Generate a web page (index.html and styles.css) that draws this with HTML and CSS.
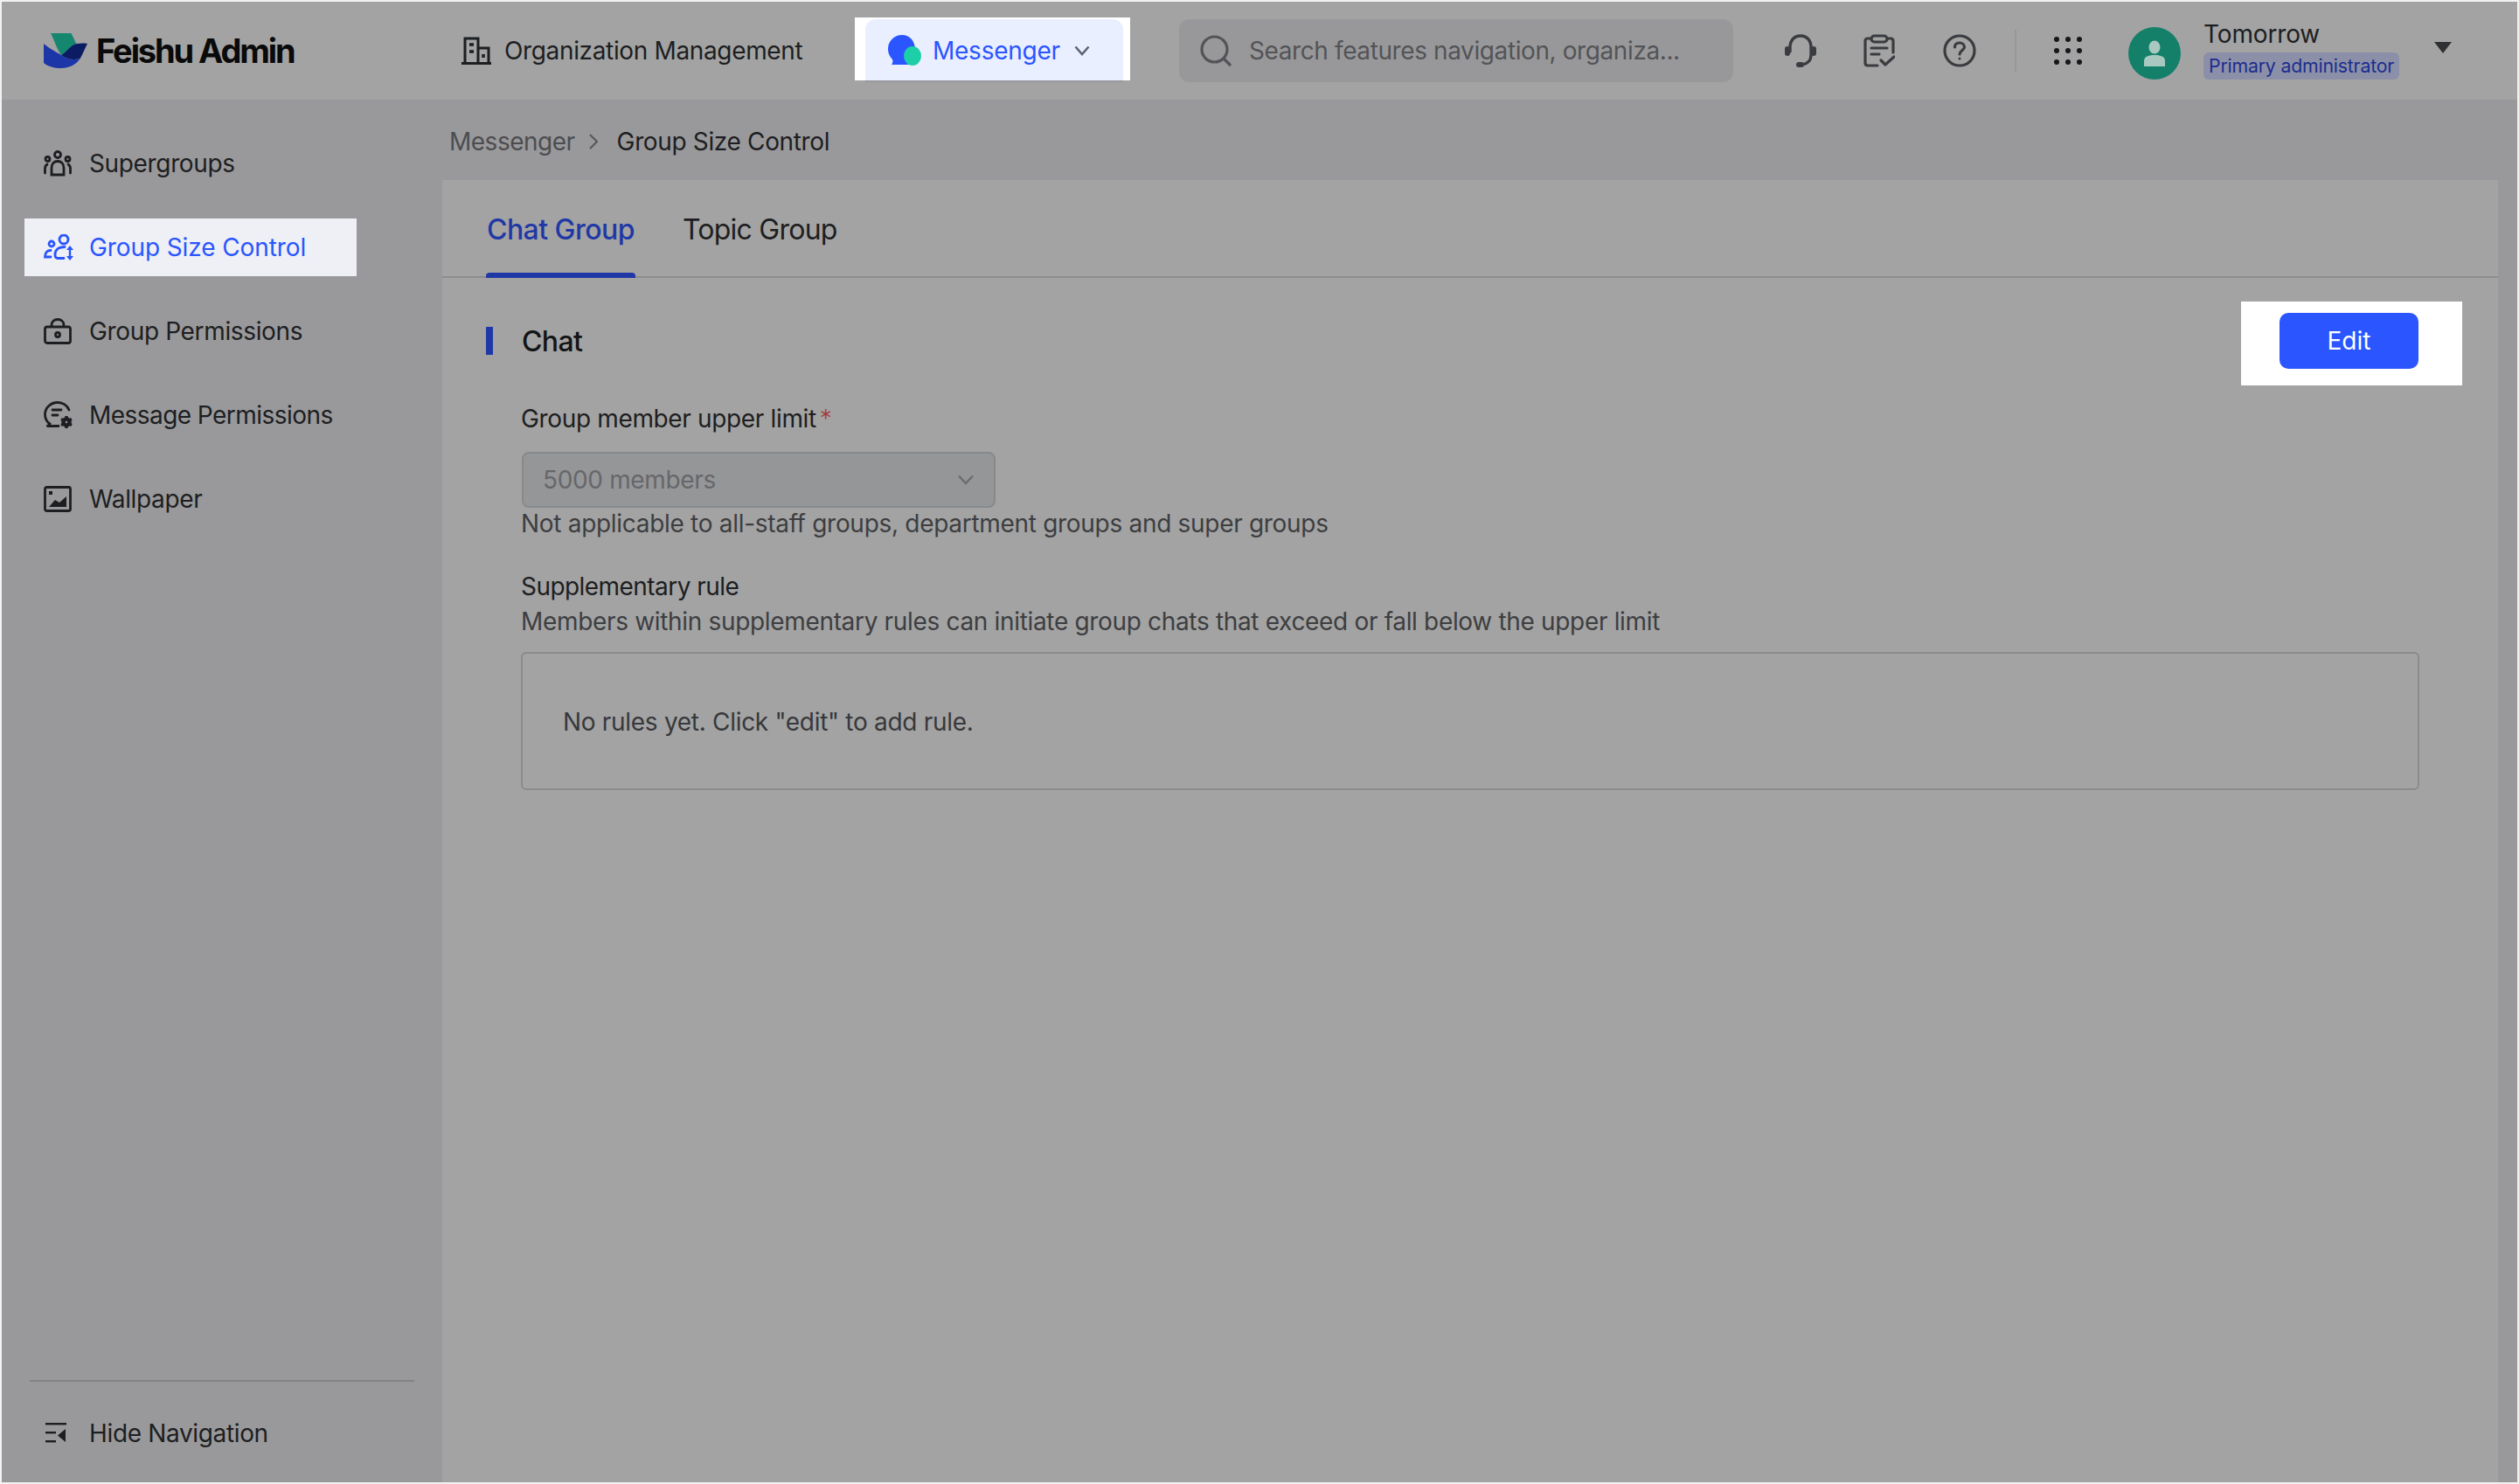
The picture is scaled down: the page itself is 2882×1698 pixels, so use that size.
FILE: index.html
```html
<!DOCTYPE html>
<html lang="en">
<head>
<meta charset="utf-8">
<title>Feishu Admin</title>
<link rel="stylesheet" href="styles.css">
</head>
<body>
<div class="app">
  <header class="topbar">
    <div class="brand">
      <svg class="logo" viewBox="0 0 50 40" width="50" height="40">
        <path fill="#16876f" d="M8 0H31.5L38 13.5C32 17 26 21 20 25C15 18 12 8 8 0Z"/>
        <path fill="#1c36a8" d="M0 12C7 18 14 21 20 25C27 30 34 31 41.7 29C37 36 29 40 20 40C12 40 5 38 0 34Z"/>
        <path fill="#0c1c63" d="M20 25C25 22 29 17 33 14C38 11.500 44 11 50 12C47 18 45 23 41.700 29C34 31 27 30 20 25Z"/>
      </svg>
      <span class="brand-name">Feishu Admin</span>
    </div>
    <div class="org">
      <svg viewBox="0 0 34 32" width="34" height="32" fill="none" stroke="#1d1e21" stroke-width="3">
        <path d="M0 30.500H34M4 30V2H19V30M19 13H31V30"/>
        <path d="M9 9H14M9 17H14M25 20V24" stroke-width="3.500"/>
      </svg>
      <span>Organization Management</span>
    </div>
    <div class="spot">
      <div class="product">
        <svg viewBox="0 0 38 36" width="38" height="36">
          <path fill="#2a55ff" d="M16 0C25 0 31 7 31 17V34H4C5 33 6 30 5 28C2 25 0 21 0 16C0 7 7 0 16 0Z"/>
          <ellipse fill="#1ccfa8" cx="28" cy="24" rx="10" ry="11"/>
        </svg>
        <span>Messenger</span>
        <svg class="chev" viewBox="0 0 18 12" width="18" height="12" fill="none" stroke="#5b6270" stroke-width="2.500"><path d="M1.500 1.500L9 10L16.500 1.500"/></svg>
      </div>
    </div>
    <div class="search">
      <svg viewBox="0 0 36 36" width="36" height="36" fill="none" stroke="#535457" stroke-width="3.200" stroke-linecap="round"><circle cx="16.500" cy="16.500" r="14.500"/><path d="M27 27L34 34"/></svg>
      <span>Search features navigation, organiza...</span>
    </div>
    <div class="tools">
      <svg viewBox="0 0 36 38" width="36" height="38" fill="none" stroke="#3a3c40" stroke-width="3.400" stroke-linecap="round">
        <path d="M6 20V15C6 7 11 2 18 2C25 2 30 7 30 15V24C30 30 26 34 20 35"/>
        <rect x="0" y="14" width="6" height="11" rx="3" fill="#3a3c40" stroke="none"/>
        <rect x="30" y="14" width="6" height="11" rx="3" fill="#3a3c40" stroke="none"/>
        <rect x="13" y="32" width="9" height="6" rx="3" fill="#3a3c40" stroke="none"/>
      </svg>
      <svg viewBox="0 0 36 38" width="36" height="38" fill="none" stroke="#3a3c40" stroke-width="3.200" stroke-linecap="round" stroke-linejoin="round">
        <path d="M8 5H5C3 5 2 6 2 8V33C2 35 3 36 5 36H16M28 5H31C33 5 34 6 34 8V21"/>
        <rect x="9" y="2" width="18" height="7" rx="3.500"/>
        <path d="M9 16H27M9 23H18M20 30L25 35L35 26"/>
      </svg>
      <svg viewBox="0 0 38 38" width="38" height="38" fill="none" stroke="#3a3c40" stroke-width="3.200" stroke-linecap="round">
        <circle cx="19" cy="19" r="17"/>
        <path d="M13.500 15C13.500 11.500 16 10 19 10C22 10 24.500 12 24.500 15C24.500 18 19 19 19 23"/>
        <circle cx="19" cy="28" r="1.500" fill="#3a3c40" stroke="none"/>
      </svg>
      <i class="sep"></i>
      <div class="dots"><i></i><i></i><i></i><i></i><i></i><i></i><i></i><i></i><i></i></div>
    </div>
    <div class="user">
      <div class="avatar">
        <svg viewBox="0 0 24 30" width="24" height="30" fill="#a9c9c0"><ellipse cx="12" cy="8" rx="6.500" ry="7.500"/><path d="M0 30V24C0 19 4 17 12 17C20 17 24 19 24 24V30Z"/></svg>
      </div>
      <div class="user-info">
        <div class="user-name">Tomorrow</div>
        <div class="user-role">Primary administrator</div>
      </div>
      <svg class="caret" viewBox="0 0 20 13" width="20" height="13"><path fill="#2f3033" d="M0 0H20L10 13Z"/></svg>
    </div>
  </header>
  <div class="body">
    <aside class="sidebar">
      <nav class="nav">
        <a class="nav-item">
          <svg viewBox="0 0 32 30" width="32" height="30" fill="none" stroke="#1d1e21" stroke-width="2.800" stroke-linecap="round">
            <circle cx="16" cy="5" r="3.500"/><circle cx="4.500" cy="10" r="2.500"/><circle cx="27.500" cy="10" r="2.500"/>
            <path d="M9 28V20C9 15 12 12.500 16 12.500C20 12.500 23 15 23 20V28ZM1.500 26V21C1.500 18 2.500 17 4 16M30.500 26V21C30.500 18 29.500 17 28 16"/>
          </svg>
          <span>Supergroups</span>
        </a>
        <a class="nav-item active">
          <svg viewBox="0 0 34 30" width="34" height="30" fill="none" stroke="#2a55ff" stroke-width="2.800" stroke-linecap="round">
            <circle cx="23" cy="6" r="5"/><circle cx="9" cy="11" r="3"/>
            <path d="M8 18.500C4 18.500 1.500 21 1.500 26H8M24 14.500C17 14.500 13 18 13 23C13 26 14 27.500 16 27.500H23"/>
            <path d="M30 16V27" stroke-width="2.400"/>
            <path fill="#2a55ff" stroke="none" d="M30 13L34 18H26ZM30 30L34 25H26Z"/>
          </svg>
          <span>Group Size Control</span>
        </a>
        <a class="nav-item">
          <svg viewBox="0 0 32 30" width="32" height="30" fill="none" stroke="#1d1e21" stroke-width="2.800">
            <rect x="1.500" y="10" width="29" height="18.500" rx="2.500"/>
            <path d="M9 10V8C9 4 12 1.500 16 1.500C20 1.500 23 4 23 8V10"/>
            <circle cx="16" cy="19" r="2.500"/>
          </svg>
          <span>Group Permissions</span>
        </a>
        <a class="nav-item nav-item-tight">
          <svg viewBox="0 0 34 32" width="34" height="32" fill="none" stroke="#1d1e21" stroke-width="2.800" stroke-linecap="round">
            <path d="M29 10C27 5 22 1.500 16 1.500C8 1.500 1.500 7.500 1.500 15C1.500 20 3.500 23.500 7 26C6 27.500 5 28 3.500 28.500H17"/>
            <path d="M10 10H20M10 16H16"/>
            <circle cx="26" cy="24" r="3.500" stroke-width="4.500"/>
            <path d="M26 17V19M26 29V31M20 20.500L22 21.500M30 26.500L32 27.500M20 27.500L22 26.500M30 21.500L32 20.500" stroke-width="3.400" stroke-linecap="butt"/>
          </svg>
          <span>Message Permissions</span>
        </a>
        <a class="nav-item">
          <svg viewBox="0 0 32 30" width="32" height="30" fill="none" stroke="#1d1e21" stroke-width="2.800">
            <rect x="1.500" y="1.500" width="29" height="27" rx="2"/>
            <rect x="6" y="6" width="4" height="4" fill="#1d1e21" stroke="none"/>
            <path fill="#1d1e21" stroke="none" d="M6 24L13 16L18 19L26 12V24Z"/>
          </svg>
          <span>Wallpaper</span>
        </a>
      </nav>
      <div class="sidebar-foot">
        <a class="nav-item">
          <svg viewBox="0 0 24 24" width="24" height="24" fill="#1d1e21">
            <rect x="0" y="0" width="24" height="2.400"/><rect x="0" y="10" width="12" height="2.400"/><rect x="0" y="20" width="12" height="2.400"/>
            <path d="M23 7V22L14 14.500Z"/>
          </svg>
          <span>Hide Navigation</span>
        </a>
      </div>
    </aside>
    <main class="main">
      <div class="crumbs">
        <span class="crumb-parent">Messenger</span>
        <svg viewBox="0 0 10 18" width="10" height="18" fill="none" stroke="#55565a" stroke-width="2"><path d="M1 1L9 9L1 17"/></svg>
        <span>Group Size Control</span>
      </div>
      <section class="card">
        <div class="tabs">
          <div class="tab active">Chat Group</div>
          <div class="tab">Topic Group</div>
        </div>
        <div class="pane">
          <div class="pane-head">
            <h2 class="pane-title">Chat</h2>
            <div class="edit-spot"><button class="edit-btn" type="button">Edit</button></div>
          </div>
          <div class="form">
            <div class="label">Group member upper limit<span class="req">*</span></div>
            <div class="select">
              <span>5000 members</span>
              <svg viewBox="0 0 20 12" width="20" height="12" fill="none" stroke="#6b6c6f" stroke-width="2.400"><path d="M2 1.500L10 10L18 1.500"/></svg>
            </div>
            <div class="hint">Not applicable to all-staff groups, department groups and super groups</div>
            <div class="label label-rule">Supplementary rule</div>
            <div class="hint hint-rule">Members within supplementary rules can initiate group chats that exceed or fall below the upper limit</div>
            <div class="rules">No rules yet. Click "edit" to add rule.</div>
          </div>
        </div>
      </section>
    </main>
  </div>
</div>
</body>
</html>
```
FILE: styles.css
```css
* { box-sizing: border-box; }
html, body { margin: 0; padding: 0; }
body {
  font-family: Inter, "Liberation Sans", sans-serif;
  font-size: 28px;
  letter-spacing: -0.35px;
  color: #1d1e21;
  background: #f2f2f2;
}
.app {
  width: 2882px;
  height: 1698px;
  padding: 2px;
  display: flex;
  flex-direction: column;
  overflow: hidden;
}
.topbar {
  height: 112px;
  flex: none;
  background: #a3a3a3;
  display: flex;
  align-items: center;
  position: relative;
}
.brand { display: flex; align-items: center; margin-left: 48px; width: 478px; gap: 10px; }
.logo { flex: none; }
.brand-name { font-size: 38px; font-weight: 700; color: #0a0a0b; letter-spacing: -2.1px; line-height: 40px; }
.org { display: flex; align-items: center; gap: 15px; width: 450px; }
.spot {
  width: 315px;
  height: 72px;
  background: #fff;
  padding: 2px 8px 0 12px;
  margin-top: -4px;
  flex: none;
}
.product {
  height: 70px;
  background: #e9efff;
  border-radius: 12px 12px 0 0;
  box-shadow: 0 2px 0 #97989d;
  display: flex;
  align-items: center;
  padding-left: 26px;
  padding-top: 1px;
  color: #2a55ff;
  letter-spacing: -0.25px;
}
.product span { margin-left: 13px; }
.chev { margin-left: 16px; }
.search {
  width: 634px;
  height: 72px;
  margin-left: 56px;
  background: #98989a;
  border-radius: 12px;
  display: flex;
  align-items: center;
  padding-left: 24px;
  gap: 20px;
  color: #535457;
  letter-spacing: -0.4px;
  white-space: nowrap;
}
.tools { display: flex; align-items: center; margin-left: 59px; }
.tools svg + svg { margin-left: 54px; }
.tools svg:nth-child(3) { margin-left: 55px; }
.sep { width: 2px; height: 48px; background: #979797; margin-left: 44px; }
.dots {
  margin-left: 43px;
  display: grid;
  grid-template-columns: repeat(3, 6px);
  gap: 7px;
}
.dots i { width: 6px; height: 6px; border-radius: 50%; background: #16171a; }
.user { display: flex; align-items: center; margin-left: 53px; }
.avatar {
  width: 60px;
  height: 60px;
  border-radius: 50%;
  background: #15806a;
  display: flex;
  align-items: center;
  justify-content: center;
  margin-top: 6px;
}
.user-info { margin-left: 26px; width: 264px; }
.user-name { line-height: 34px; margin-top: -3px; letter-spacing: -0.15px; }
.user-role {
  display: inline-block;
  margin-top: 1px;
  height: 31px;
  line-height: 31px;
  padding: 0 6px;
  font-size: 21.300px;
  letter-spacing: -0.2px;
  color: #1c2d8f;
  background: #8b90a8;
  border-radius: 6px;
  white-space: nowrap;
}
.caret { margin-top: -8px; }

.body { flex: 1; display: flex; min-height: 0; background: #99999b; }
.sidebar { width: 504px; flex: none; display: flex; flex-direction: column; padding-left: 26px; }
.nav { display: flex; flex-direction: column; gap: 30px; padding-top: 40px; }
.nav-item {
  width: 380px;
  height: 66px;
  display: flex;
  align-items: center;
  position: relative;
  padding-left: 74px;
  padding-bottom: 1px;
  white-space: nowrap;
}
.nav-item-tight { letter-spacing: -0.55px; }
.nav-item svg { position: absolute; left: 22px; top: 50%; transform: translateY(-50%); }
.nav-item.active { background: #eef0f5; color: #2a55ff; letter-spacing: -0.1px; }
.sidebar-foot {
  margin-top: auto;
  margin-left: 6px;
  margin-right: 32px;
  border-top: 2px solid #838385;
  padding-top: 26px;
  height: 117px;
}
.sidebar-foot .nav-item { width: auto; padding-left: 68px; }
.sidebar-foot .nav-item svg { left: 18px; }

.main { flex: 1; display: flex; flex-direction: column; min-width: 0; padding-right: 22px; }
.crumbs { height: 92px; flex: none; display: flex; align-items: center; gap: 16px; padding-left: 8px; padding-top: 3px; }
.crumb-parent { color: #4c4d50; letter-spacing: -0.5px; }
.crumbs span:last-child { margin-left: 6px; }
.card { flex: 1; background: #a3a3a3; }
.tabs { height: 112px; display: flex; gap: 53px; padding-left: 50px; border-bottom: 2px solid #8e8e8e; }
.tab { font-size: 32px; height: 112px; line-height: 114px; padding: 0 1px; letter-spacing: -0.75px; }
.tab.active { color: #1f38a6; font-weight: 500; position: relative; letter-spacing: -0.55px; }
.tab.active::after {
  content: "";
  position: absolute;
  left: 0;
  right: 0;
  bottom: 0;
  height: 6px;
  background: #1f38a6;
  border-radius: 4px 4px 0 0;
}
.pane { padding: 27px 0 0 50px; }
.pane-head { display: flex; justify-content: space-between; align-items: flex-start; border-left: 8px solid transparent; position: relative; }
.pane-head::before { content: ""; position: absolute; left: -8px; top: 29px; width: 8px; height: 32px; background: #1f38a6; }
.pane-title { margin: 0 0 0 33px; font-size: 32px; font-weight: 500; line-height: 40px; padding-top: 26px; color: #131416; letter-spacing: -0.6px; }
.edit-spot { width: 253px; height: 96px; background: #fff; padding: 13px 0 0 44px; margin-right: 41px; }
.edit-btn {
  display: block;
  width: 159px;
  height: 64px;
  border: 0;
  border-radius: 10px;
  background: #2a55ff;
  color: #fff;
  font: 400 28px Inter, "Liberation Sans", sans-serif;
}
.form { padding-left: 40px; margin-top: 18px; }
.label { line-height: 40px; }
.req { color: #a33a3a; margin-left: 4px; font-weight: 300; }
.select {
  width: 542px;
  height: 64px;
  margin-top: 18px;
  margin-left: 1px;
  background: #959698;
  border: 2px solid #88898b;
  border-radius: 8px;
  display: flex;
  align-items: center;
  justify-content: space-between;
  padding: 0 22px;
  color: #66676a;
}
.hint { color: #3d3e41; line-height: 38px; margin-top: -1px; letter-spacing: -0.3px; }
.label-rule { margin-top: 33px; letter-spacing: -0.55px; }
.hint-rule { margin-top: 1px; letter-spacing: -0.33px; }
.rules {
  width: 2172px;
  height: 158px;
  margin-top: 16px;
  border: 2px solid #8b8b8c;
  border-radius: 6px;
  display: flex;
  align-items: center;
  padding: 1px 0 0 46px;
  color: #37383b;
  letter-spacing: -0.3px;
}
```
